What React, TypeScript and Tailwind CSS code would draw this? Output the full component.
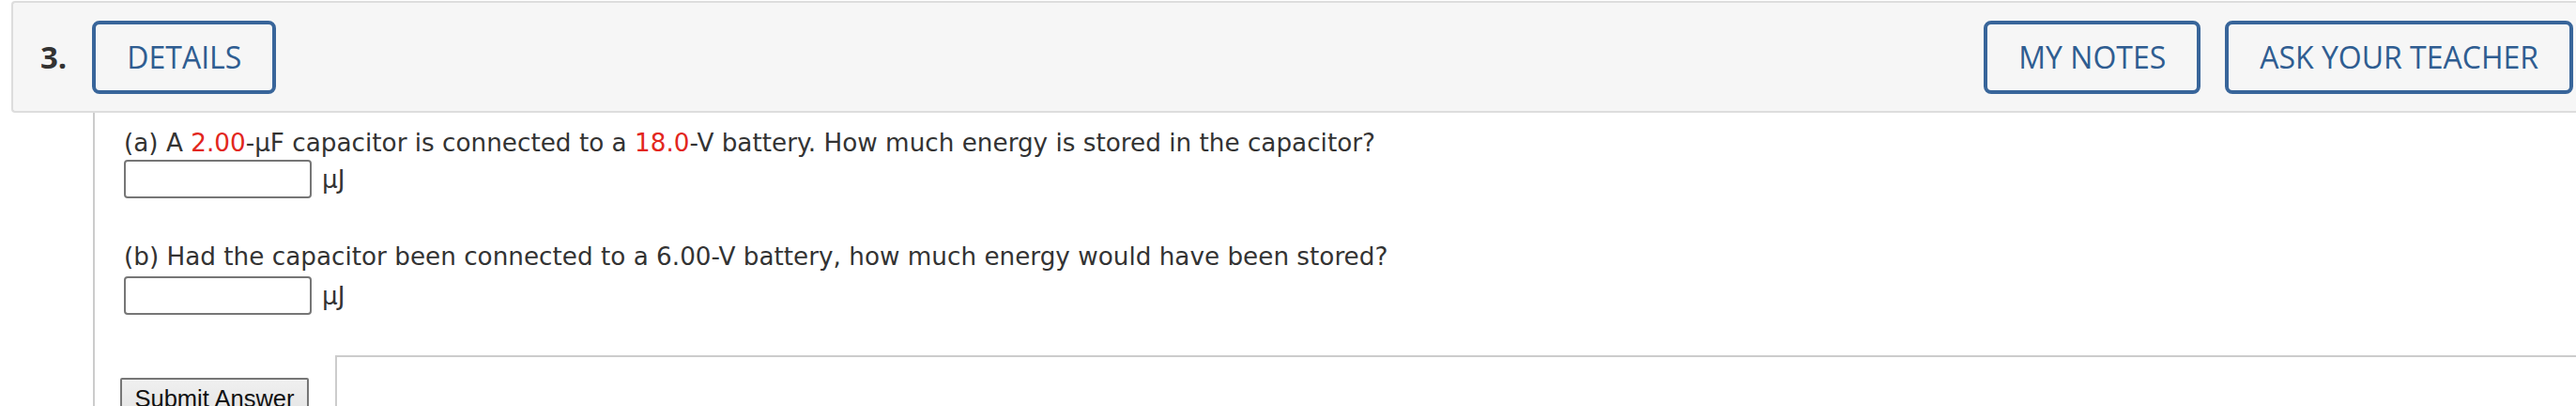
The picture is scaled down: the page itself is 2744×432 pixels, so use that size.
import React from "react";

// --- Header button ---
const HeaderButton: React.FC<{ label: string; className?: string }> = ({
  label,
  className,
}) => (
  <button
    className={
      "flex h-[78px] shrink-0 items-center rounded-[8px] border-4 border-[#38659a] px-[33px] font-['Open_Sans',sans-serif] text-[32px] font-medium leading-none text-[#2f5d91] " +
      (className ?? "")
    }
  >
    {label}
  </button>
);

// --- Answer row ---
const AnswerRow: React.FC<{ className?: string }> = ({ className }) => (
  <div className={"flex items-center " + (className ?? "")}>
    <input
      type="text"
      className="h-[41px] w-[200px] rounded-[4px] border-2 border-[#767676] bg-white"
    />
    <span className="ml-[11px] leading-[26px]">µJ</span>
  </div>
);

export default function App() {
  return (
    <div className="h-[432px] w-[2744px] overflow-hidden bg-white">
      <div className="ml-[12px] mt-[1px] flex h-[119px] items-center rounded-l-[4px] border-2 border-r-0 border-[#dddddd] bg-[#f6f6f6] pl-[29px] pr-[3px]">
        <span className="font-['Open_Sans',sans-serif] text-[33px] font-bold leading-none text-[#333333]">
          3.
        </span>
        <HeaderButton label="DETAILS" className="ml-[27px]" />
        <div className="ml-auto flex gap-[26px]">
          <HeaderButton label="MY NOTES" />
          <HeaderButton label="ASK YOUR TEACHER" />
        </div>
      </div>

      <div className="ml-[99px] h-[320px] border-l-2 border-[#cccccc] pl-[31px] font-['DejaVu_Sans',Verdana,sans-serif] text-[26.25px] text-[#333333]">
        <p className="pt-[19px] leading-[26px]">
          (a) A <span className="text-[#e2261c]">2.00</span>-µF capacitor is
          connected to a <span className="text-[#e2261c]">18.0</span>-V battery.
          How much energy is stored in the capacitor?
        </p>
        <AnswerRow className="mt-[5px]" />

        <p className="mt-[49px] leading-[26px]">
          (b) Had the capacitor been connected to a 6.00-V battery, how much
          energy would have been stored?
        </p>
        <AnswerRow className="mt-[8px]" />

        <div className="-ml-[4px] mt-[43px] flex items-start">
          <button className="mt-[24px] h-[44px] w-[201px] shrink-0 rounded-[2px] border-2 border-[#767676] bg-[linear-gradient(#f0f0f0,#e3e3e3)] pt-[1px] font-['Liberation_Sans',Arial,sans-serif] text-[25.5px] leading-[29px] text-[#111111]">
            Submit Answer
          </button>
          <div className="ml-[28px] h-[120px] w-[2500px] shrink-0 border-2 border-[#cccccc]" />
        </div>
      </div>
    </div>
  );
}
